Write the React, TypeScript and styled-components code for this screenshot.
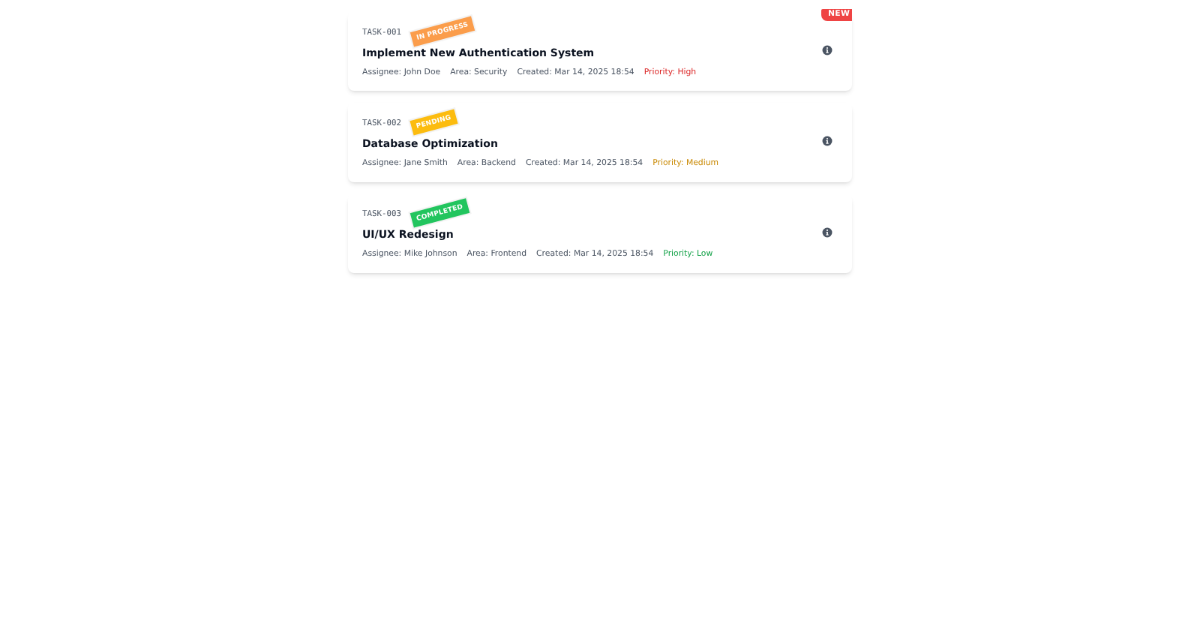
import React from 'react';
import styled, { createGlobalStyle } from 'styled-components';

const GlobalStyle = createGlobalStyle`
  body {
    margin: 0;
    background: #ffffff;
    font-family: 'DejaVu Sans', sans-serif;
    text-rendering: geometricPrecision;
  }
`;

const Page = styled.div`
  width: 672px;
  margin: 0 auto;
  padding-top: 16px;
  display: flex;
  flex-direction: column;
  gap: 16px;
  transform: scale(0.75);
  transform-origin: top center;
  will-change: transform;
`;

const Card = styled.div`
  position: relative;
  height: 105.33px;
  box-sizing: border-box;
  padding: 0 26px 0 19px;
  display: flex;
  align-items: center;
  justify-content: space-between;
  background: #ffffff;
  border-radius: 8px;
  box-shadow: 0 4px 6px -1px rgba(0, 0, 0, 0.1), 0 2px 4px -2px rgba(0, 0, 0, 0.1);
`;

const Body = styled.div`
  display: flex;
  flex-direction: column;
`;

const TopRow = styled.div`
  display: flex;
  align-items: center;
  gap: 13px;
  height: 18px;
`;

const TaskId = styled.span`
  margin-top: -1px;
  font-family: 'DejaVu Sans Mono', monospace;
  font-size: 10.8px;
  color: #4b5563;
`;

const statusColors = {
  progress: '#fb9d4b',
  pending: '#fcbc0f',
  completed: '#22c55e',
};

const Stamp = styled.span<{ $status: keyof typeof statusColors }>`
  display: inline-block;
  padding: 4px 6.5px;
  font-size: 9px;
  line-height: 12px;
  font-weight: 700;
  letter-spacing: 0.25px;
  color: #ffffff;
  background: ${(p) => statusColors[p.$status]};
  box-shadow: 0 0 0 2px rgba(0, 0, 0, 0.05);
  transform: translateY(-1px) rotate(-15deg);
`;

const Title = styled.div`
  margin-top: 10px;
  font-size: 14px;
  line-height: 19px;
  font-weight: 700;
  color: #0b1220;
`;

const Meta = styled.div`
  margin-top: 7px;
  display: flex;
  gap: 13px;
  font-size: 10.8px;
  line-height: 16px;
  color: #4b5563;
`;

const priorityColors = {
  High: '#dc2626',
  Medium: '#ca8a04',
  Low: '#16a34a',
};

const Priority = styled.span<{ $level: keyof typeof priorityColors }>`
  color: ${(p) => priorityColors[p.$level]};
`;

const InfoButton = styled.div`
  width: 14px;
  height: 14px;
  margin-top: -3px;
  color: #4b5563;
  display: flex;
`;

const Ribbon = styled.div`
  position: absolute;
  top: -4px;
  right: 0;
  width: 41px;
  height: 16px;
  box-sizing: border-box;
  padding-left: 9px;
  background: #ef4444;
  border-radius: 2px 0 0 8px;
  color: #ffffff;
  font-size: 10.8px;
  line-height: 12px;
  font-weight: 700;
  letter-spacing: 0.3px;
  white-space: nowrap;
  overflow: hidden;
`;

function InfoIcon() {
  return (
    <svg width="14" height="14" viewBox="0 0 14 14">
      <circle cx="7" cy="7" r="6.5" fill="currentColor" />
      <circle cx="7" cy="4" r="1.1" fill="#fff" />
      <path d="M5.5 6h2.4v3.6h.8v1.1H5.4V9.6h.9V7.1h-.8z" fill="#fff" />
    </svg>
  );
}

const tasks = [
  { id: 'TASK-001', status: 'progress', label: 'IN PROGRESS', title: 'Implement New Authentication System', assignee: 'John Doe', area: 'Security', level: 'High', isNew: true },
  { id: 'TASK-002', status: 'pending', label: 'PENDING', title: 'Database Optimization', assignee: 'Jane Smith', area: 'Backend', level: 'Medium', isNew: false },
  { id: 'TASK-003', status: 'completed', label: 'COMPLETED', title: 'UI/UX Redesign', assignee: 'Mike Johnson', area: 'Frontend', level: 'Low', isNew: false },
] as const;

export default function App() {
  return (
    <>
      <GlobalStyle />
      <Page>
        {tasks.map((t) => (
          <Card key={t.id}>
            {t.isNew && <Ribbon>NEW</Ribbon>}
            <Body>
              <TopRow>
                <TaskId>{t.id}</TaskId>
                <Stamp $status={t.status}>{t.label}</Stamp>
              </TopRow>
              <Title>{t.title}</Title>
              <Meta>
                <span>Assignee: {t.assignee}</span>
                <span>Area: {t.area}</span>
                <span>Created: Mar 14, 2025 18:54</span>
                <Priority $level={t.level}>Priority: {t.level}</Priority>
              </Meta>
            </Body>
            <InfoButton>
              <InfoIcon />
            </InfoButton>
          </Card>
        ))}
      </Page>
    </>
  );
}
